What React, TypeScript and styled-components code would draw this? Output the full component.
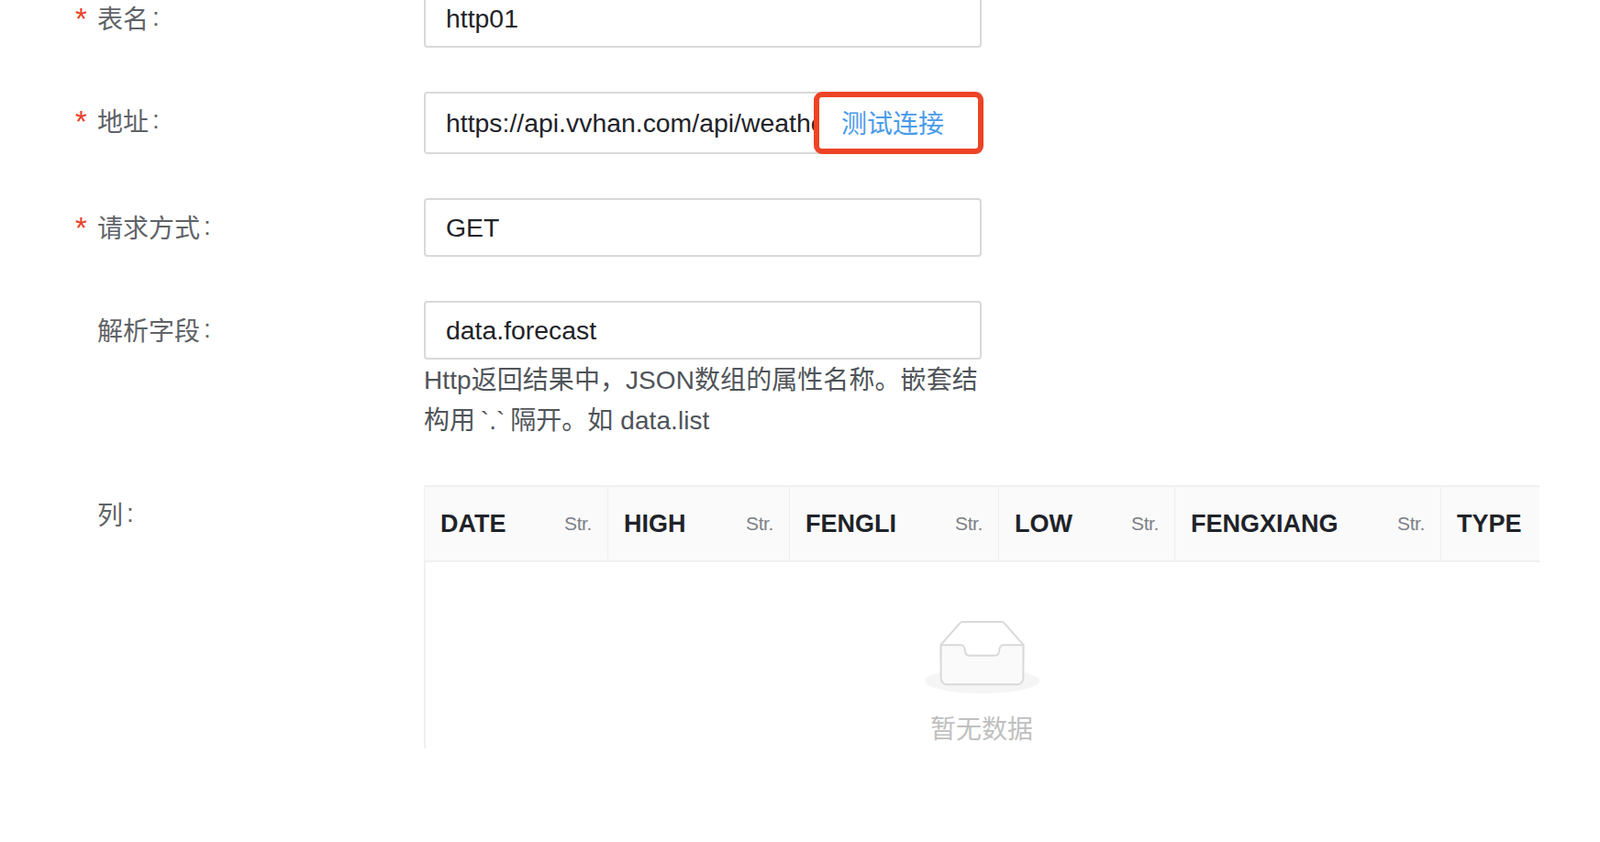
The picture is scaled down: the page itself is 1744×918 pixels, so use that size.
import React from "react";
import styled, { createGlobalStyle } from "styled-components";

const columns = [
  { name: "DATE", width: 200 },
  { name: "HIGH", width: 198 },
  { name: "FENGLI", width: 228 },
  { name: "LOW", width: 192 },
  { name: "FENGXIANG", width: 290 },
  { name: "TYPE", width: 120, noType: true },
];

const EmptyIcon = () => (
  <svg width="125" height="80" viewBox="0 0 64 41">
    <g transform="translate(0 1)" fill="none" fillRule="evenodd">
      <ellipse fill="#f5f5f5" cx="32" cy="33" rx="32" ry="7" />
      <g fillRule="nonzero" stroke="#d9d9d9">
        <path d="M55 12.76L44.854 1.258C44.367.474 43.656 0 42.907 0H21.093c-.749 0-1.46.474-1.947 1.257L9 12.761V22h46v-9.24z" />
        <path
          d="M41.613 15.931c0-1.605.994-2.93 2.227-2.931H55v18.137C55 33.26 53.68 35 52.05 35h-40.1C10.32 35 9 33.259 9 31.137V13h11.16c1.233 0 2.227 1.323 2.227 2.928v.022c0 1.605 1.005 2.901 2.237 2.901h14.752c1.232 0 2.237-1.308 2.237-2.913v-.007z"
          fill="#fafafa"
        />
      </g>
    </g>
  </svg>
);

export default function App() {
  return (
    <>
      <GlobalStyle />
      <Page>
        <Row>
          <Label required>表名<Colon>:</Colon></Label>
          <TextInput readOnly value="http01" />
        </Row>
        <Row>
          <Label required>地址<Colon>:</Colon></Label>
          <Control>
            <TextInput tall readOnly value="https://api.vvhan.com/api/weather" />
            <TestButton>测试连接</TestButton>
          </Control>
        </Row>
        <Row>
          <Label required>请求方式<Colon>:</Colon></Label>
          <TextInput readOnly value="GET" />
        </Row>
        <Row>
          <Label>解析字段<Colon>:</Colon></Label>
          <Control>
            <TextInput readOnly value="data.forecast" />
            <Help>
              {"Http返回结果中，JSON数组的属性名称。嵌套结构用\u2009`.`\u2009隔开。如 data.list"}
            </Help>
          </Control>
        </Row>
        <Row>
          <Label>列<Colon>:</Colon></Label>
          <Table>
            <HeadRow>
              {columns.map((col) => (
                <HeadCell key={col.name} $width={col.width}>
                  <ColName>{col.name}</ColName>
                  {!col.noType && <ColType>Str.</ColType>}
                </HeadCell>
              ))}
            </HeadRow>
            <TableBody>
              <EmptyIcon />
              <EmptyText>暂无数据</EmptyText>
            </TableBody>
          </Table>
        </Row>
      </Page>
    </>
  );
}

const GlobalStyle = createGlobalStyle`
  html, body {
    margin: 0;
    height: 100%;
    background: #fff;
    overflow: hidden;
  }
  body {
    font-family: "Liberation Sans", "Noto Sans CJK SC", sans-serif;
    font-size: 28px;
  }
`;

const Page = styled.div`
  width: 1744px;
  height: 918px;
  margin-top: -12px;
  display: flex;
  flex-direction: column;
  gap: 48px;
`;

const Row = styled.div`
  display: flex;
  align-items: flex-start;
`;

const Label = styled.div<{ required?: boolean }>`
  flex: 0 0 462px;
  height: 64px;
  box-sizing: border-box;
  padding: 0 0 2px 106px;
  position: relative;
  display: flex;
  align-items: center;
  color: #5f6368;
  font-size: 28px;

  &::before {
    content: ${(p) => (p.required ? '"*"' : "none")};
    position: absolute;
    left: 82px;
    top: 14px;
    color: #e8412a;
    font-size: 33px;
  }
`;

const Colon = styled.span`
  margin-left: 4px;
`;

const Control = styled.div`
  position: relative;
  width: 608px;
`;

const TextInput = styled.input<{ tall?: boolean }>`
  display: block;
  box-sizing: border-box;
  width: 608px;
  height: ${(p) => (p.tall ? "68px" : "64px")};
  padding: 0 21px 0 22px;
  border: 2px solid #d9d9d9;
  border-radius: 4px;
  background: #fff;
  color: #1f2329;
  font-family: inherit;
  font-size: 28.4px;
  outline: none;
`;

const TestButton = styled.div`
  position: absolute;
  top: 0;
  right: -2px;
  width: 185px;
  height: 68px;
  box-sizing: border-box;
  padding: 0 0 2px 24px;
  display: flex;
  align-items: center;
  border: 6px solid #ee4325;
  border-radius: 9px;
  background: #fff;
  color: #4a9bea;
  font-size: 28px;
`;

const Help = styled.div`
  margin-top: 1px;
  color: #4f5459;
  font-size: 28px;
  line-height: 44px;
  letter-spacing: 0.07px;
`;

const Table = styled.div`
  width: 1216px;
  overflow: hidden;
`;

const HeadRow = styled.div`
  display: flex;
  height: 84px;
  box-sizing: border-box;
  border-top: 2px solid #f0f0f0;
  border-bottom: 2px solid #f0f0f0;
  background: #fafafa;
`;

const HeadCell = styled.div<{ $width: number }>`
  flex: 0 0 ${(p) => p.$width}px;
  box-sizing: border-box;
  padding: 0 17px;
  display: flex;
  align-items: center;
  justify-content: space-between;
  border-left: 1.5px solid #f0f0f0;
`;

const ColName = styled.span`
  color: #1f2329;
  font-size: 27px;
  font-weight: 700;
`;

const ColType = styled.span`
  color: #7d8187;
  font-size: 21px;
  letter-spacing: -0.4px;
`;

const TableBody = styled.div`
  height: 203px;
  box-sizing: border-box;
  padding: 63px 2px 0 0;
  display: flex;
  flex-direction: column;
  align-items: center;
  border-left: 2px solid #f0f0f0;
  overflow: hidden;
`;

const EmptyText = styled.div`
  margin-top: 17px;
  color: #bfbfbf;
  font-size: 28px;
`;
